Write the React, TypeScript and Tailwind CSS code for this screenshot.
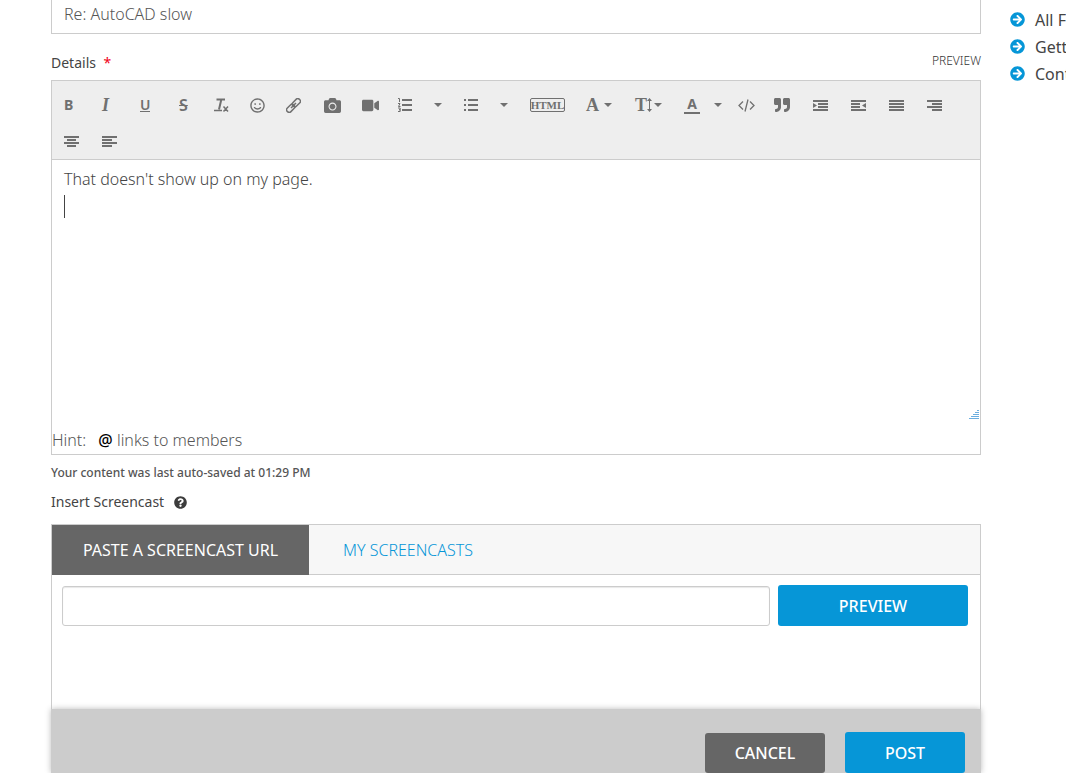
import React, { useState } from "react";
import {
  FaArrowCircleRight,
  FaCamera,
  FaQuestionCircle,
  FaQuoteRight,
  FaRegSmile,
  FaVideo,
} from "react-icons/fa";

const SIDEBAR_LINKS = ["All Forums", "Getting Started", "Contact Us"];

const TABS = [
  { id: "url", label: "PASTE A SCREENCAST URL", width: "w-[257px]" },
  { id: "mine", label: "MY SCREENCASTS", width: "w-[198px]" },
];

function Caret() {
  return (
    <svg width="8" height="4" viewBox="0 0 8 4" fill="currentColor">
      <path d="M0 0h8L4 4z" />
    </svg>
  );
}

// Paragraph icons: each row is [x, width] of one bar
function Bars({ rows, arrow }: { rows: number[][]; arrow?: string }) {
  return (
    <svg width="15" height="11" viewBox="0 0 15 11" fill="currentColor">
      {rows.map(([x, width], i) => (
        <rect key={i} x={x} y={i * 3} width={width} height="2" />
      ))}
      {arrow && <path d={arrow} />}
    </svg>
  );
}

function LinkIcon() {
  return (
    <svg width="15" height="15" viewBox="0 0 15 15" fill="none" stroke="currentColor" strokeWidth="1.5">
      <g transform="rotate(-45 7.5 7.5)">
        <rect x="-1" y="5" width="9" height="5" rx="2" />
        <rect x="7" y="5" width="9" height="5" rx="2" />
        <path d="M4 7.5h7" />
      </g>
    </svg>
  );
}

function NumberedIcon() {
  return (
    <svg width="14" height="14" viewBox="0 0 14 14" fill="currentColor">
      <path d="M4 1h10v2H4zM4 6h10v2H4zM4 11h10v2H4z" />
      <path d="M0 .5h1.5v3.5M0 5.5h2L.5 8.500H2.500M0 10h2.200v1.700H1 2.200v1.800H0" fill="none" stroke="currentColor" />
    </svg>
  );
}

function BulletIcon() {
  return (
    <svg width="14" height="12" viewBox="0 0 14 12" fill="currentColor">
      <path d="M0 0h2v2H0zM0 5h2v2H0zM0 10h2v2H0zM4 0h10v2H4zM4 5h10v2H4zM4 10h10v2H4z" />
    </svg>
  );
}

function CodeIcon() {
  return (
    <svg width="17" height="13" viewBox="0 0 17 13" fill="none" stroke="currentColor" strokeWidth="1.3">
      <path d="M5 2.500L1 6.500l4 4M12 2.500l4 4-4 4M10 .5l-3 12" />
    </svg>
  );
}

function ClearFormatIcon() {
  return (
    <svg width="15" height="14" viewBox="0 0 15 14" fill="none" stroke="currentColor">
      <path d="M2.500 1.500H11M7.300 1.500L5 11.500" strokeWidth="2" />
      <path d="M0 12.500h8M9.500 8.500l4.500 5M14 8.500l-4.500 5" strokeWidth="1.500" />
    </svg>
  );
}

function SizeArrow() {
  return (
    <svg width="5" height="14" viewBox="0 0 5 14" fill="currentColor">
      <path d="M2.500 0L5 3H3v8h2l-2.500 3L0 11h2V3H0z" />
    </svg>
  );
}

const TOOLS = [
  { name: "Bold", width: "w-[38px]", icon: <span className="font-bold">B</span> },
  { name: "Italic", width: "w-[38px]", icon: <span className="font-['Liberation_Serif'] text-lg font-bold italic">I</span> },
  { name: "Underline", width: "w-[38px]", icon: <span className="border-b font-semibold leading-3">U</span> },
  { name: "Strikethrough", width: "w-9", icon: <span className="px-px text-base font-semibold line-through">S</span> },
  { name: "Clear formatting", width: "w-9", icon: <ClearFormatIcon /> },
  { name: "Emoticon", width: "w-9", icon: <FaRegSmile size={15} /> },
  { name: "Link", width: "w-[38px]", icon: <LinkIcon /> },
  { name: "Photo", width: "w-[38px]", icon: <FaCamera size={17} /> },
  { name: "Video", width: "w-9", icon: <FaVideo size={17} /> },
  { name: "Numbered list", width: "w-9", icon: <NumberedIcon /> },
  { name: "Numbered list styles", width: "w-[30px]", icon: <Caret /> },
  { name: "Bullet list", width: "w-9", icon: <BulletIcon /> },
  { name: "Bullet list styles", width: "w-[30px]", icon: <Caret /> },
  {
    name: "HTML",
    width: "w-14",
    icon: (
      <span className="flex h-[14px] w-[35px] items-center justify-center rounded-xs border font-['Liberation_Serif'] text-[11px] font-bold">
        HTML
      </span>
    ),
  },
  {
    name: "Font family",
    width: "w-[49px]",
    icon: (
      <>
        <span className="mr-[5px] font-['Liberation_Serif'] text-lg font-bold">A</span>
        <Caret />
      </>
    ),
  },
  {
    name: "Font size",
    width: "w-[49px]",
    icon: (
      <>
        <span className="font-['Liberation_Serif'] text-lg font-bold">T</span>
        <SizeArrow />
        <span className="ml-[2px]"><Caret /></span>
      </>
    ),
  },
  { name: "Text color", width: "w-[30px]", icon: <span className="w-4 border-b-2 text-center text-sm font-bold leading-4">A</span> },
  { name: "Text colors", width: "w-6", icon: <Caret /> },
  { name: "Code", width: "w-9", icon: <CodeIcon /> },
  { name: "Quote", width: "w-[39px]", icon: <FaQuoteRight size={16} /> },
  { name: "Increase indent", width: "w-[38px]", icon: <Bars rows={[[0, 15], [5, 10], [5, 10], [0, 15]]} arrow="M0 3l4 2.500L0 8z" /> },
  { name: "Decrease indent", width: "w-[38px]", icon: <Bars rows={[[0, 15], [0, 9], [0, 9], [0, 15]]} arrow="M15 3l-4 2.500L15 8z" /> },
  { name: "Justify", width: "w-[38px]", icon: <Bars rows={[[0, 15], [0, 15], [0, 15], [0, 15]]} /> },
  { name: "Align right", width: "w-[38px]", icon: <Bars rows={[[0, 15], [5, 10], [0, 15], [5, 10]]} /> },
  { name: "Align center", width: "w-[38px]", icon: <Bars rows={[[0, 15], [3, 9], [0, 15], [3, 9]]} /> },
  { name: "Align left", width: "w-[38px]", icon: <Bars rows={[[0, 15], [0, 10], [0, 15], [0, 10]]} /> },
];

export default function App() {
  const [tab, setTab] = useState("url");

  return (
    <div className="flex min-h-screen overflow-hidden bg-white pl-[51px] font-['Noto_Sans',sans-serif] text-[#444]">
      <main className="flex min-w-0 flex-1 flex-col">
        <input
          aria-label="Subject"
          defaultValue="Re: AutoCAD slow"
          className="h-[34px] w-full border border-t-0 border-[#ccc] px-3 pb-[6px] text-base font-light text-[#555] outline-none"
        />

        <div className="flex h-[46px] items-center justify-between pt-3">
          <label htmlFor="details" className="text-sm">
            Details <span className="ml-1 text-[#f00020]">*</span>
          </label>
          <button className="pb-1 text-xs font-light text-[#333]">PREVIEW</button>
        </div>

        <section className="border border-[#ccc]">
          <div className="flex flex-wrap border-b border-[#ccc] bg-[#eee] px-3 pt-[6px]">
            {TOOLS.map((tool) => (
              <button
                key={tool.name}
                aria-label={tool.name}
                className={`flex h-9 items-center text-sm leading-none text-[#707070] ${tool.width}`}
              >
                {tool.icon}
              </button>
            ))}
          </div>
          <div className="relative h-[260px]">
            <textarea
              id="details"
              defaultValue="That doesn't show up on my page."
              className="block h-full w-full resize-none px-3 py-[5px] text-base font-light leading-7 text-[#444] outline-none"
            />
            {/* text cursor on the empty second line */}
            <span className="absolute left-3 top-[35px] h-[23px] w-px bg-[#444]" />
            <svg className="absolute bottom-px right-px" width="10" height="10" viewBox="0 0 10 10">
              <path d="M8 1.500h2M6 3.500h4M4 5.500h6M2 7.500h8M0 9.500h10" fill="none" stroke="#6aaee0" />
            </svg>
          </div>
          <p className="h-[34px] pt-2 text-base font-light text-[#555]">
            Hint: <span className="ml-2 font-medium text-black">@</span> links to members
          </p>
        </section>

        <p className="mt-2 text-xs font-medium leading-5 text-[#555]">
          Your content was last auto-saved at 01:29 PM
        </p>
        <div className="mt-[7px] flex h-6 items-center gap-[10px] text-sm">
          Insert Screencast
          <FaQuestionCircle size={13} className="text-[#3c3c3c]" />
        </div>

        <section className="mt-[10px] flex-1 border border-b-0 border-[#ccc]">
          <div className="flex h-[50px] bg-[#f7f7f7] shadow-[inset_0_-1px_0_#ccc]">
            {TABS.map((t) => (
              <button
                key={t.id}
                onClick={() => setTab(t.id)}
                className={`text-base ${t.width} ${tab === t.id ? "bg-[#666] text-white" : "font-light text-[#0696d7]"}`}
              >
                {t.label}
              </button>
            ))}
          </div>
          <div className="flex items-end gap-2 pb-[83px] pl-[10px] pr-3 pt-[10px]">
            <input
              aria-label="Screencast URL"
              className="h-10 min-w-0 flex-1 rounded-[3px] border border-[#ccc] px-3 shadow-[inset_0_1px_1px_#e8e8e8] outline-none"
            />
            <button className="h-[41px] w-[190px] rounded-[3px] bg-[#0696d7] text-base font-medium text-white">
              PREVIEW
            </button>
          </div>
        </section>

        <footer className="flex items-end justify-end gap-5 bg-[#ccc] pr-4 pt-[23px] shadow-[0_0_6px_#bbb]">
          <button className="h-10 w-[120px] rounded-[3px] bg-[#666] text-base font-medium text-white">CANCEL</button>
          <button className="h-[41px] w-[120px] rounded-[3px] bg-[#0696d7] text-base font-medium text-white">POST</button>
        </footer>
      </main>

      <aside className="w-[85px] shrink-0 overflow-hidden pl-[29px] pt-[6px]">
        <nav className="flex flex-col">
          {SIDEBAR_LINKS.map((link) => (
            <a key={link} href="#" className="flex h-[27px] items-center gap-[10px] whitespace-nowrap text-base">
              <FaArrowCircleRight size={15} className="shrink-0 text-[#0696d7]" />
              {link}
            </a>
          ))}
        </nav>
      </aside>
    </div>
  );
}
